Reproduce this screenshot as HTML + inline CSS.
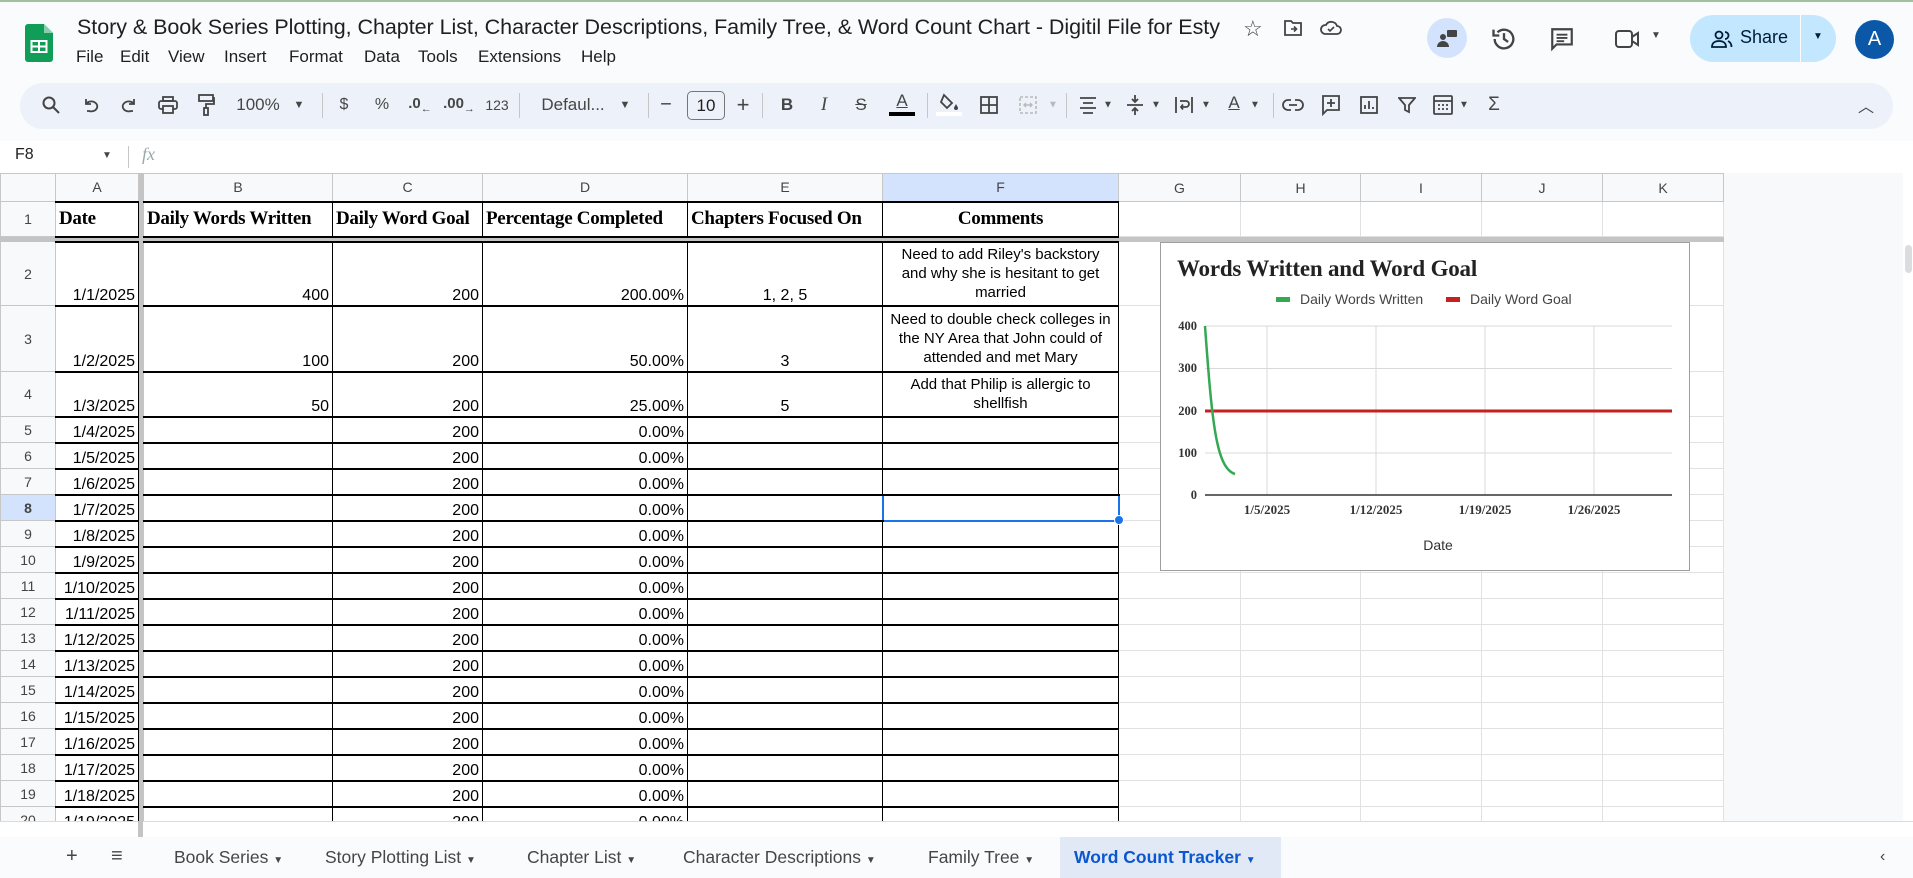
<!DOCTYPE html>
<html><head><meta charset="utf-8">
<style>
*{box-sizing:border-box;margin:0;padding:0}
body{width:1913px;height:878px;overflow:hidden;background:#f9fbfd;font-family:"Liberation Sans",Arial,sans-serif;color:#1f1f1f;position:relative}
.a{position:absolute;white-space:nowrap}
.menu span{position:absolute;top:47px;font-size:17px;color:#1f1f1f}
.tb{position:absolute;left:20px;top:83px;width:1873px;height:46px;background:#edf2fa;border-radius:23px}
.ti{position:absolute;top:105px;transform:translate(-50%,-50%);font-size:17px;color:#444746;white-space:nowrap}
.sep{position:absolute;top:93px;width:1px;height:25px;background:#c4c7c5}
svg.i{position:absolute}
table.g{position:absolute;left:0;top:173px;border-collapse:collapse;table-layout:fixed;background:#fff}
table.g td{border:1px solid #e1e1e1;padding:0 3px;font-size:16px;overflow:hidden;white-space:nowrap;vertical-align:bottom;color:#000}
table.g td.h{background:#f8f9fa;color:#444;text-align:center;vertical-align:middle;font-size:14px;border-color:#c7c7c7}
table.g tr.ch td{height:28px}
table.g td.fz{background:#c4c4c4;border-color:#c4c4c4;padding:0}
table.g tr.fzr td{height:5px;background:#c4c4c4;border-color:#c4c4c4;padding:0}
table.g td.b{border:1px solid #000;border-top:2px solid #000;border-bottom:2px solid #000}
table.g td.hd{font-family:"Liberation Serif",serif;font-weight:bold;font-size:19px;vertical-align:middle;letter-spacing:-0.3px}
.r{text-align:right}.c{text-align:center}
td.cm{white-space:normal!important;font-size:15px!important;line-height:19px;text-align:center;vertical-align:middle!important;padding:0 14px!important}
.tab{position:absolute;top:847px;font-size:17.5px;color:#444746}
</style></head><body>
<div class="a" style="left:0;top:0;width:1913px;height:2px;background:#a3c29c"></div>
<svg class="i" style="left:25px;top:24px" width="28" height="38" viewBox="0 0 28 38"><path d="M3 0h16l9 9v26a3 3 0 0 1-3 3H3a3 3 0 0 1-3-3V3a3 3 0 0 1 3-3z" fill="#0f9d58"/><path d="M19 0l9 9h-9z" fill="#87ceac"/><rect x="6.5" y="17" width="15" height="11" fill="none" stroke="#fff" stroke-width="2"/><path d="M6.5 22.5h15M14 17v11" stroke="#fff" stroke-width="2"/></svg>
<div class="a" style="left:77px;top:15px;font-size:21.5px;color:#1f1f1f;letter-spacing:-0.05px">Story &amp; Book Series Plotting, Chapter List, Character Descriptions, Family Tree, &amp; Word Count Chart - Digitil File for Esty</div>
<div class="a" style="left:1243px;top:16px;font-size:22px;color:#444">☆</div>
<svg class="i" style="left:1283px;top:19px" width="20" height="18" viewBox="0 0 20 18"><path d="M2 2h6l2 2h8v12H2z" fill="none" stroke="#444" stroke-width="1.8"/><path d="M8 10h5M11 7.5l2.5 2.5L11 12.5" fill="none" stroke="#444" stroke-width="1.6"/></svg>
<svg class="i" style="left:1320px;top:18px" width="22" height="18" viewBox="0 0 22 18"><path d="M5 16h12a4 4 0 0 0 0-8 6 6 0 0 0-11-1 4.5 4.5 0 0 0-1 9z" fill="none" stroke="#444" stroke-width="1.8"/><path d="M8 11l2 2 4-4" fill="none" stroke="#444" stroke-width="1.6"/></svg>
<div class="menu"><span style="left:76px">File</span><span style="left:120px">Edit</span><span style="left:168px">View</span><span style="left:224px">Insert</span><span style="left:289px">Format</span><span style="left:364px">Data</span><span style="left:418px">Tools</span><span style="left:478px">Extensions</span><span style="left:581px">Help</span></div>
<div class="a" style="left:1427px;top:18px;width:40px;height:40px;border-radius:50%;background:#d3e3fd"></div>
<svg class="i" style="left:1436px;top:28px" width="22" height="20" viewBox="0 0 22 20"><circle cx="7" cy="9" r="3" fill="#444"/><path d="M1 19a6 6 0 0 1 12 0z" fill="#444"/><rect x="11" y="2" width="10" height="7" rx="1" fill="#444"/></svg>
<svg class="i" style="left:1490px;top:25px" width="28" height="28" viewBox="0 0 24 24"><path d="M4 12a8 8 0 1 0 2.4-5.7" fill="none" stroke="#444" stroke-width="2"/><path d="M3 4v5h5" fill="none" stroke="#444" stroke-width="2"/><path d="M12 7v5l3.5 2.5" fill="none" stroke="#444" stroke-width="2"/></svg>
<svg class="i" style="left:1549px;top:26px" width="26" height="26" viewBox="0 0 24 24"><path d="M3 3h18v14H7l-4 4z" fill="none" stroke="#444" stroke-width="2"/><path d="M7 8h10M7 11h10M7 14h7" stroke="#444" stroke-width="1.8"/></svg>
<svg class="i" style="left:1614px;top:28px" width="28" height="22" viewBox="0 0 28 22"><rect x="2" y="3" width="16" height="16" rx="3" fill="none" stroke="#444" stroke-width="2"/><path d="M18 9l6-4v12l-6-4z" fill="none" stroke="#444" stroke-width="2"/></svg>
<div class="a" style="left:1651px;top:30px;font-size:10px;color:#444">▼</div>
<div class="a" style="left:1690px;top:15px;width:146px;height:47px;border-radius:24px;background:#c2e7ff"></div>
<div class="a" style="left:1800px;top:15px;width:1px;height:47px;background:#f9fbfd"></div>
<svg class="i" style="left:1711px;top:29px" width="22" height="20" viewBox="0 0 22 20"><circle cx="8" cy="6" r="3.5" fill="none" stroke="#001d35" stroke-width="1.8"/><path d="M1 18c0-4 3-6 7-6s7 2 7 6z" fill="none" stroke="#001d35" stroke-width="1.8"/><path d="M14 3a3.5 3.5 0 0 1 0 7M17 12c2 1 3.5 3 3.5 6" fill="none" stroke="#001d35" stroke-width="1.8"/></svg>
<div class="a" style="left:1740px;top:27px;font-size:18px;color:#001d35">Share</div>
<div class="a" style="left:1813px;top:31px;font-size:10px;color:#001d35">▼</div>
<div class="a" style="left:1855px;top:20px;width:39px;height:39px;border-radius:50%;background:#0b57a8;color:#fff;font-size:20px;text-align:center;line-height:39px">A</div>
<div class="tb"></div>
<svg class="i" style="left:41px;top:95px" width="20" height="20" viewBox="0 0 20 20"><circle cx="8" cy="8" r="5.5" fill="none" stroke="#444" stroke-width="2"/><path d="M12 12l6 6" stroke="#444" stroke-width="2"/></svg>
<svg class="i" style="left:82px;top:96px" width="18" height="18" viewBox="0 0 18 18"><path d="M4 3v5h5" fill="none" stroke="#444" stroke-width="1.8"/><path d="M4 8a6 5 0 1 1 3 7H5" fill="none" stroke="#444" stroke-width="1.8"/></svg>
<svg class="i" style="left:120px;top:96px" width="18" height="18" viewBox="0 0 18 18"><path d="M14 3v5H9" fill="none" stroke="#444" stroke-width="1.8"/><path d="M14 8a6 5 0 1 0-3 7h2" fill="none" stroke="#444" stroke-width="1.8"/></svg>
<svg class="i" style="left:158px;top:96px" width="20" height="18" viewBox="0 0 20 18"><rect x="5" y="1" width="10" height="4" fill="none" stroke="#444" stroke-width="1.8"/><rect x="1" y="5" width="18" height="8" rx="2" fill="none" stroke="#444" stroke-width="1.8"/><rect x="5" y="10" width="10" height="7" fill="#edf2fa" stroke="#444" stroke-width="1.8"/></svg>
<svg class="i" style="left:197px;top:94px" width="18" height="22" viewBox="0 0 18 22"><rect x="2" y="1" width="14" height="6" fill="none" stroke="#444" stroke-width="1.8"/><path d="M16 4h1v6H9v4" fill="none" stroke="#444" stroke-width="1.8"/><rect x="7" y="14" width="4" height="7" fill="none" stroke="#444" stroke-width="1.8"/></svg>
<div class="ti" style="left:258px">100%</div><div class="ti" style="left:299px;font-size:11px">▼</div>
<div class="sep" style="left:322px"></div>
<div class="ti" style="left:344px;font-size:16px">$</div>
<div class="ti" style="left:382px;font-size:16px">%</div>
<div class="ti" style="left:420px;font-size:15px;font-weight:bold">.0<sub style="font-size:11px">←</sub></div>
<div class="ti" style="left:459px;font-size:15px;font-weight:bold">.00<sub style="font-size:11px">→</sub></div>
<div class="ti" style="left:497px;font-size:14px">123</div>
<div class="sep" style="left:519px"></div>
<div class="ti" style="left:573px">Defaul...</div><div class="ti" style="left:625px;font-size:11px">▼</div>
<div class="sep" style="left:648px"></div>
<div class="ti" style="left:666px;font-size:20px">−</div>
<div class="a" style="left:687px;top:91px;width:38px;height:29px;border:1px solid #747775;border-radius:5px;text-align:center;font-size:17px;line-height:27px;color:#1f1f1f">10</div>
<div class="ti" style="left:743px;font-size:22px">+</div>
<div class="sep" style="left:762px"></div>
<div class="ti" style="left:787px;font-weight:bold">B</div>
<div class="ti" style="left:824px;font-style:italic;font-family:'Liberation Serif',serif;font-size:19px">I</div>
<div class="ti" style="left:861px;text-decoration:line-through">S</div>
<div class="ti" style="left:902px;top:101px;text-decoration:underline">A</div>
<div class="a" style="left:889px;top:112px;width:26px;height:4px;background:#000"></div>
<div class="sep" style="left:927px"></div>
<svg class="i" style="left:939px;top:93px" width="22" height="20" viewBox="0 0 22 20"><path d="M5 2l8 8-5 5-6-6z" fill="none" stroke="#444" stroke-width="1.8"/><path d="M17 11c1 2 2 3 2 4a2 2 0 0 1-4 0c0-1 1-2 2-4z" fill="#444"/></svg>
<div class="a" style="left:936px;top:112px;width:26px;height:4px;background:#fff"></div>
<svg class="i" style="left:980px;top:96px" width="18" height="18" viewBox="0 0 18 18"><rect x="1" y="1" width="16" height="16" fill="none" stroke="#444" stroke-width="1.8"/><path d="M9 1v16M1 9h16" stroke="#444" stroke-width="1.8"/></svg>
<svg class="i" style="left:1019px;top:96px" width="18" height="18" viewBox="0 0 18 18"><rect x="1" y="1" width="16" height="16" fill="none" stroke="#b7b9bb" stroke-width="1.6" stroke-dasharray="3 2"/><path d="M5 9h8M7 7l-2 2 2 2M11 7l2 2-2 2" fill="none" stroke="#b7b9bb" stroke-width="1.4"/></svg>
<div class="ti" style="left:1053px;font-size:10px;color:#b7b9bb">▼</div>
<div class="sep" style="left:1066px"></div>
<svg class="i" style="left:1079px;top:96px" width="18" height="18" viewBox="0 0 18 18"><path d="M1 2h16M4 7h10M1 12h16M4 17h10" stroke="#444" stroke-width="1.8"/></svg><div class="ti" style="left:1108px;font-size:10px">▼</div>
<svg class="i" style="left:1126px;top:94px" width="18" height="22" viewBox="0 0 18 22"><path d="M1 11h16M9 1v7M6 5l3 3 3-3M9 21v-7M6 17l3-3 3 3" fill="none" stroke="#444" stroke-width="1.8"/></svg><div class="ti" style="left:1156px;font-size:10px">▼</div>
<svg class="i" style="left:1174px;top:95px" width="20" height="20" viewBox="0 0 20 20"><path d="M2 2v16M18 2v16M6 6h6a3 3 0 0 1 0 6H7M9 9.5L7 12l2 2.5" fill="none" stroke="#444" stroke-width="1.8"/></svg><div class="ti" style="left:1206px;font-size:10px">▼</div>
<div class="ti" style="left:1234px;top:103px;text-decoration:underline">A</div><div class="ti" style="left:1255px;font-size:10px">▼</div>
<div class="sep" style="left:1273px"></div>
<svg class="i" style="left:1282px;top:96px" width="22" height="18" viewBox="0 0 22 18"><path d="M9 4H6a5 5 0 0 0 0 10h3M13 4h3a5 5 0 0 1 0 10h-3M7 9h8" fill="none" stroke="#444" stroke-width="1.8"/></svg>
<svg class="i" style="left:1321px;top:94px" width="20" height="22" viewBox="0 0 20 22"><path d="M2 2h16v14H6l-4 4z" fill="none" stroke="#444" stroke-width="1.8"/><path d="M10 5v8M6 9h8" stroke="#444" stroke-width="1.8"/></svg>
<svg class="i" style="left:1360px;top:96px" width="18" height="18" viewBox="0 0 18 18"><rect x="1" y="1" width="16" height="16" fill="none" stroke="#444" stroke-width="1.8"/><path d="M5 13V9M9 13V5M13 13v-2" stroke="#444" stroke-width="1.8"/></svg>
<svg class="i" style="left:1398px;top:96px" width="18" height="18" viewBox="0 0 18 18"><path d="M1 2h16l-6 7v7l-4-2V9z" fill="none" stroke="#444" stroke-width="1.8"/></svg>
<svg class="i" style="left:1433px;top:95px" width="20" height="20" viewBox="0 0 20 20"><rect x="1" y="1" width="18" height="18" rx="1" fill="none" stroke="#444" stroke-width="1.8"/><path d="M1 6h18M5 10h2M9 10h2M13 10h2M5 14h2M9 14h2M13 14h2" stroke="#444" stroke-width="1.8"/></svg><div class="ti" style="left:1464px;font-size:10px">▼</div>
<div class="ti" style="left:1494px;font-size:19px">Σ</div>
<div class="ti" style="left:1866px;font-size:16px">︿</div>
<div class="a" style="left:0;top:141px;width:1913px;height:32px;background:#fff"></div>
<div class="a" style="left:15px;top:146px;font-size:16px">F8</div>
<div class="a" style="left:102px;top:150px;font-size:10px;color:#444">▼</div>
<div class="a" style="left:128px;top:146px;width:1px;height:22px;background:#c4c7c5"></div>
<div class="a" style="left:142px;top:144px;font-size:18px;font-style:italic;font-family:'Liberation Serif',serif;color:#9aa">fx</div>
<div class="a" style="left:0;top:173px;width:1913px;height:664px;background:#f8f9fa"></div>
<table class="g">
<colgroup><col style="width:55px"><col style="width:83px"><col style="width:5px"><col style="width:189px"><col style="width:150px"><col style="width:205px"><col style="width:195px"><col style="width:236px"><col style="width:122px"><col style="width:120px"><col style="width:121px"><col style="width:121px"><col style="width:121px"></colgroup>
<tr class="ch"><td class="h"></td><td class="h">A</td><td class="fz"></td><td class="h">B</td><td class="h">C</td><td class="h">D</td><td class="h">E</td><td class="h" style="background:#d3e3fd">F</td><td class="h">G</td><td class="h">H</td><td class="h">I</td><td class="h">J</td><td class="h">K</td></tr>
<tr style="height:35px"><td class="h">1</td><td class="b hd">Date</td><td class="fz"></td><td class="b hd">Daily Words Written</td><td class="b hd">Daily Word Goal</td><td class="b hd">Percentage Completed</td><td class="b hd">Chapters Focused On</td><td class="b hd c">Comments</td><td></td><td></td><td></td><td></td><td></td></tr>
<tr class="fzr"><td></td><td></td><td></td><td></td><td></td><td></td><td></td><td></td><td></td><td></td><td></td><td></td><td></td></tr>
<tr style="height:64px"><td class="h">2</td><td class="b r">1/1/2025</td><td class="fz"></td><td class="b r">400</td><td class="b r">200</td><td class="b r">200.00%</td><td class="b c">1, 2, 5</td><td class="b cm">Need to add Riley's backstory and why she is hesitant to get married</td><td></td><td></td><td></td><td></td><td></td></tr>
<tr style="height:66px"><td class="h">3</td><td class="b r">1/2/2025</td><td class="fz"></td><td class="b r">100</td><td class="b r">200</td><td class="b r">50.00%</td><td class="b c">3</td><td class="b cm" style="padding:0 4px!important">Need to double check colleges in the NY Area that John could of attended and met Mary</td><td></td><td></td><td></td><td></td><td></td></tr>
<tr style="height:45px"><td class="h">4</td><td class="b r">1/3/2025</td><td class="fz"></td><td class="b r">50</td><td class="b r">200</td><td class="b r">25.00%</td><td class="b c">5</td><td class="b cm">Add that Philip is allergic to shellfish</td><td></td><td></td><td></td><td></td><td></td></tr>
<tr style="height:26px"><td class="h">5</td><td class="b r">1/4/2025</td><td class="fz"></td><td class="b"></td><td class="b r">200</td><td class="b r">0.00%</td><td class="b"></td><td class="b"></td><td></td><td></td><td></td><td></td><td></td></tr>
<tr style="height:26px"><td class="h">6</td><td class="b r">1/5/2025</td><td class="fz"></td><td class="b"></td><td class="b r">200</td><td class="b r">0.00%</td><td class="b"></td><td class="b"></td><td></td><td></td><td></td><td></td><td></td></tr>
<tr style="height:26px"><td class="h">7</td><td class="b r">1/6/2025</td><td class="fz"></td><td class="b"></td><td class="b r">200</td><td class="b r">0.00%</td><td class="b"></td><td class="b"></td><td></td><td></td><td></td><td></td><td></td></tr>
<tr style="height:26px"><td class="h" style="background:#d3e3fd;font-weight:bold">8</td><td class="b r">1/7/2025</td><td class="fz"></td><td class="b"></td><td class="b r">200</td><td class="b r">0.00%</td><td class="b"></td><td class="b" style="border:2px solid #1a73e8"></td><td></td><td></td><td></td><td></td><td></td></tr>
<tr style="height:26px"><td class="h">9</td><td class="b r">1/8/2025</td><td class="fz"></td><td class="b"></td><td class="b r">200</td><td class="b r">0.00%</td><td class="b"></td><td class="b"></td><td></td><td></td><td></td><td></td><td></td></tr>
<tr style="height:26px"><td class="h">10</td><td class="b r">1/9/2025</td><td class="fz"></td><td class="b"></td><td class="b r">200</td><td class="b r">0.00%</td><td class="b"></td><td class="b"></td><td></td><td></td><td></td><td></td><td></td></tr>
<tr style="height:26px"><td class="h">11</td><td class="b r">1/10/2025</td><td class="fz"></td><td class="b"></td><td class="b r">200</td><td class="b r">0.00%</td><td class="b"></td><td class="b"></td><td></td><td></td><td></td><td></td><td></td></tr>
<tr style="height:26px"><td class="h">12</td><td class="b r">1/11/2025</td><td class="fz"></td><td class="b"></td><td class="b r">200</td><td class="b r">0.00%</td><td class="b"></td><td class="b"></td><td></td><td></td><td></td><td></td><td></td></tr>
<tr style="height:26px"><td class="h">13</td><td class="b r">1/12/2025</td><td class="fz"></td><td class="b"></td><td class="b r">200</td><td class="b r">0.00%</td><td class="b"></td><td class="b"></td><td></td><td></td><td></td><td></td><td></td></tr>
<tr style="height:26px"><td class="h">14</td><td class="b r">1/13/2025</td><td class="fz"></td><td class="b"></td><td class="b r">200</td><td class="b r">0.00%</td><td class="b"></td><td class="b"></td><td></td><td></td><td></td><td></td><td></td></tr>
<tr style="height:26px"><td class="h">15</td><td class="b r">1/14/2025</td><td class="fz"></td><td class="b"></td><td class="b r">200</td><td class="b r">0.00%</td><td class="b"></td><td class="b"></td><td></td><td></td><td></td><td></td><td></td></tr>
<tr style="height:26px"><td class="h">16</td><td class="b r">1/15/2025</td><td class="fz"></td><td class="b"></td><td class="b r">200</td><td class="b r">0.00%</td><td class="b"></td><td class="b"></td><td></td><td></td><td></td><td></td><td></td></tr>
<tr style="height:26px"><td class="h">17</td><td class="b r">1/16/2025</td><td class="fz"></td><td class="b"></td><td class="b r">200</td><td class="b r">0.00%</td><td class="b"></td><td class="b"></td><td></td><td></td><td></td><td></td><td></td></tr>
<tr style="height:26px"><td class="h">18</td><td class="b r">1/17/2025</td><td class="fz"></td><td class="b"></td><td class="b r">200</td><td class="b r">0.00%</td><td class="b"></td><td class="b"></td><td></td><td></td><td></td><td></td><td></td></tr>
<tr style="height:26px"><td class="h">19</td><td class="b r">1/18/2025</td><td class="fz"></td><td class="b"></td><td class="b r">200</td><td class="b r">0.00%</td><td class="b"></td><td class="b"></td><td></td><td></td><td></td><td></td><td></td></tr>
<tr style="height:26px"><td class="h">20</td><td class="b r">1/19/2025</td><td class="fz"></td><td class="b"></td><td class="b r">200</td><td class="b r">0.00%</td><td class="b"></td><td class="b"></td><td></td><td></td><td></td><td></td><td></td></tr>
</table>
<div class="a" style="left:1114px;top:515px;width:10px;height:10px;border-radius:50%;background:#1a73e8;border:1px solid #fff"></div>
<div class="a" style="left:0;top:821px;width:1913px;height:16px;background:#fff;border-top:1px solid #dadce0"></div>
<div class="a" style="left:138px;top:821px;width:5px;height:16px;background:#c4c4c4"></div>
<div class="a" style="left:1903px;top:173px;width:10px;height:648px;background:#fff"></div>
<div class="a" style="left:1905px;top:245px;width:7px;height:28px;border-radius:4px;background:#dadce0"></div>
<div class="a" style="left:1160px;top:242px;width:530px;height:329px;background:#fff;border:1px solid #9e9e9e"></div>
<div class="a" style="left:1177px;top:256px;font-family:'Liberation Serif',serif;font-size:23px;color:#222;font-weight:bold;letter-spacing:-0.2px">Words Written and Word Goal</div>
<div class="a" style="left:1276px;top:297px;width:14px;height:5px;background:#34a853"></div>
<div class="a" style="left:1300px;top:291px;font-size:14px;color:#444">Daily Words Written</div>
<div class="a" style="left:1446px;top:297px;width:14px;height:5px;background:#c5221f"></div>
<div class="a" style="left:1470px;top:291px;font-size:14px;color:#444">Daily Word Goal</div>
<svg class="i" style="left:1160px;top:242px" width="530" height="329">
<g stroke="#d9d9d9" stroke-width="1"><path d="M45 84h467M45 126.5h467M45 169h467M45 211h467"/><path d="M107 84v169M216 84v169M325 84v169M434 84v169"/></g>
<path d="M45 253h467" stroke="#333" stroke-width="1.5"/>
<path d="M45 169h467" stroke="#c5221f" stroke-width="3"/>
<path d="M45 84C52 180 56 226 75 232" fill="none" stroke="#34a853" stroke-width="2.5"/>
<g font-family="Liberation Serif,serif" font-size="12.5" font-weight="bold" fill="#333" text-anchor="end"><text x="37" y="88">400</text><text x="37" y="130">300</text><text x="37" y="173">200</text><text x="37" y="215">100</text><text x="37" y="257">0</text></g>
<g font-family="Liberation Serif,serif" font-size="13" font-weight="bold" fill="#333" text-anchor="middle"><text x="107" y="272">1/5/2025</text><text x="216" y="272">1/12/2025</text><text x="325" y="272">1/19/2025</text><text x="434" y="272">1/26/2025</text></g>
<text x="278" y="308" font-family="Liberation Sans,sans-serif" font-size="14" fill="#333" text-anchor="middle">Date</text>
</svg>
<div class="a" style="left:0;top:837px;width:1913px;height:41px;background:#f9fbfd"></div>
<div class="a" style="left:1060px;top:837px;width:221px;height:41px;background:#e1e9f7"></div>
<div class="tab" style="left:66px;font-size:20px;top:845px">+</div>
<div class="tab" style="left:111px;font-size:20px;top:845px">≡</div>
<div class="tab" style="left:174px">Book Series <span style="font-size:10px">▼</span></div>
<div class="tab" style="left:325px">Story Plotting List <span style="font-size:10px">▼</span></div>
<div class="tab" style="left:527px">Chapter List <span style="font-size:10px">▼</span></div>
<div class="tab" style="left:683px">Character Descriptions <span style="font-size:10px">▼</span></div>
<div class="tab" style="left:928px">Family Tree <span style="font-size:10px">▼</span></div>
<div class="tab" style="left:1074px;color:#0b57d0;font-weight:bold">Word Count Tracker <span style="font-size:10px">▼</span></div>
<div class="a" style="left:1880px;top:848px;font-size:16px;color:#444">‹</div>
</body></html>
